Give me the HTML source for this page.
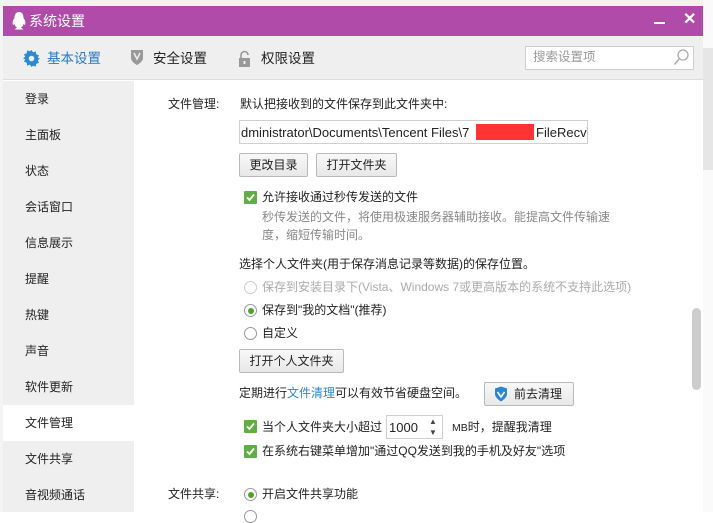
<!DOCTYPE html>
<html><head><meta charset="utf-8"><style>
*{margin:0;padding:0;box-sizing:border-box}
body{width:713px;height:512px;overflow:hidden;background:#fff;position:relative;font-family:"Liberation Sans","Noto Sans CJK SC",sans-serif;font-size:12px;color:#222;line-height:15px}
.a{position:absolute;white-space:nowrap}
.btn{position:absolute;border:1px solid #b9b9b9;border-radius:2px;background:linear-gradient(#f8f8f8,#e8e8e8);text-align:center;font-size:12px;color:#222}
.cb{position:absolute;width:13px;height:13px;background:#5fae43;border-radius:1px}
.cb svg{position:absolute;left:0;top:0}
.rd{position:absolute;width:13px;height:13px;border:1px solid #999;border-radius:50%;background:#fff}
.rd.on::after{content:"";position:absolute;left:2.5px;top:2.5px;width:6px;height:6px;border-radius:50%;background:#4aa72b}
.rd.dis{border-color:#ccc}
.side div{position:absolute;left:25px;font-size:12px}
</style></head><body>
<div class="a" style="left:0;top:0;width:713px;height:6px;background:#f2f2f2"></div>
<div class="a" style="left:703px;top:0;width:10px;height:512px;background:#fafafa"></div>
<div class="a" style="left:703px;top:48px;width:10px;height:122px;background:#e6e6e6"></div>
<div class="a" style="left:0;top:0;width:3px;height:512px;background:#f4f4f4"></div>
<div class="a" style="left:3px;top:6px;width:700px;height:30px;background:#b04ba9"></div>
<svg class="a" style="left:12px;top:12px" width="14" height="18" viewBox="0 0 14 18"><path d="M7 0C3.5 0 2.5 3 2.5 6C1 8 0 10 1 13L2.5 12C3 14 4 15 5 15.5L2.5 17.5H11.5L9 15.5C10 15 11 14 11.5 12L13 13C14 10 13 8 11.5 6C11.5 3 10.5 0 7 0Z" fill="#fff"/></svg>
<div class="a" style="left:29px;top:13px;color:#fff;font-size:14px;line-height:17px">系统设置</div>
<div class="a" style="left:654px;top:22px;width:11px;height:2px;background:#fff"></div>
<div class="a" style="left:683px;top:11px;color:#fff;font-size:16px;font-weight:bold;line-height:18px">✕</div>
<div class="a" style="left:3px;top:36px;width:700px;height:44px;background:#efefef;border-bottom:1px solid #dcdcdc"></div>
<svg class="a" style="left:23px;top:50px" width="17" height="17" viewBox="0 0 16 16"><path d="M8 0l1.5 2.2 2.6-.9.3 2.7 2.6.9-1 2.5L16 8l-2 1.6 1 2.5-2.6.9-.3 2.7-2.6-.9L8 16l-1.5-2.2-2.6.9-.3-2.7-2.6-.9 1-2.5L0 8l2-1.6-1-2.5 2.6-.9.3-2.7 2.6.9Z" fill="#2d89d3"/><circle cx="8" cy="8" r="2.6" fill="#efefef"/></svg>
<div class="a" style="left:47px;top:51px;color:#2579c4;font-size:13.5px;line-height:16px">基本设置</div>
<svg class="a" style="left:130px;top:49px" width="14" height="17" viewBox="0 0 14 17"><path d="M1 1H13V9C13 13 7 16 7 16C7 16 1 13 1 9Z" fill="#999"/><path d="M4 4L7 10L10 4" stroke="#efefef" stroke-width="1.5" fill="none"/></svg>
<div class="a" style="left:153px;top:51px;font-size:13.5px;line-height:16px">安全设置</div>
<svg class="a" style="left:238px;top:50px" width="13" height="17" viewBox="0 0 13 17"><path d="M3 8V5a3.5 3.5 0 017 0" stroke="#999" stroke-width="1.6" fill="none"/><rect x="1" y="8" width="11" height="9" fill="#999"/><rect x="5.5" y="11" width="2" height="3" fill="#efefef"/></svg>
<div class="a" style="left:261px;top:51px;font-size:13.5px;line-height:16px">权限设置</div>
<div class="a" style="left:525px;top:46px;width:169px;height:24px;border:1px solid #cfcfcf;background:#fff"></div>
<div class="a" style="left:533px;top:50px;color:#999;font-size:12.5px">搜索设置项</div>
<svg class="a" style="left:673px;top:49px" width="16" height="17" viewBox="0 0 16 17"><circle cx="10" cy="6" r="5" stroke="#aaa" stroke-width="1.3" fill="none"/><path d="M6.5 9.5L1.5 15.5" stroke="#aaa" stroke-width="1.4"/></svg>
<div class="a" style="left:3px;top:81px;width:131px;height:431px;background:#efefef"></div>
<div class="a" style="left:3px;top:405px;width:131px;height:36px;background:#fff"></div>
<div class="side">
<div style="top:92px">登录</div><div style="top:128px">主面板</div><div style="top:164px">状态</div><div style="top:200px">会话窗口</div><div style="top:236px">信息展示</div><div style="top:272px">提醒</div><div style="top:308px">热键</div><div style="top:344px">声音</div><div style="top:380px">软件更新</div><div style="top:416px">文件管理</div><div style="top:452px">文件共享</div><div style="top:488px">音视频通话</div>
</div>
<div class="a" style="left:692px;top:308px;width:9px;height:82px;background:#cdcdcd;border-radius:5px"></div>
<div class="a" style="left:168px;top:97px">文件管理:</div>
<div class="a" style="left:240px;top:97px">默认把接收到的文件保存到此文件夹中:</div>
<div class="a" style="left:239px;top:120px;width:349px;height:24px;border:1px solid #cfcfcf;background:#fff;overflow:hidden"><span style="position:absolute;left:1px;top:4px;font-size:13px">dministrator\Documents\Tencent Files\7</span><span style="position:absolute;left:236px;top:3px;width:58px;height:16px;background:#fe3434"></span><span style="position:absolute;left:295px;top:4px;font-size:13px;background:#fff;padding-left:1px">FileRecv\</span></div>
<div class="btn" style="left:239px;top:153px;width:69px;height:24px;line-height:22px">更改目录</div>
<div class="btn" style="left:316px;top:153px;width:81px;height:24px;line-height:22px">打开文件夹</div>
<div class="cb" style="left:244px;top:191px"><svg width="13" height="13"><path d="M3 6.5L5.5 9L10 3.5" stroke="#fff" stroke-width="1.8" fill="none"/></svg></div>
<div class="a" style="left:262px;top:190px">允许接收通过秒传发送的文件</div>
<div class="a" style="left:262px;top:210px;color:#888">秒传发送的文件，将使用极速服务器辅助接收。能提高文件传输速</div>
<div class="a" style="left:262px;top:228px;color:#888">度，缩短传输时间。</div>
<div class="a" style="left:239px;top:257px">选择个人文件夹(用于保存消息记录等数据)的保存位置。</div>
<div class="rd dis" style="left:244px;top:281px"></div>
<div class="a" style="left:262px;top:280px;color:#aaa">保存到安装目录下(Vista、Windows 7或更高版本的系统不支持此选项)</div>
<div class="rd on" style="left:244px;top:304px"></div>
<div class="a" style="left:262px;top:303px">保存到"我的文档"(推荐)</div>
<div class="rd" style="left:244px;top:327px"></div>
<div class="a" style="left:262px;top:326px">自定义</div>
<div class="btn" style="left:239px;top:349px;width:105px;height:24px;line-height:22px">打开个人文件夹</div>
<div class="a" style="left:239px;top:386px">定期进行<span style="color:#2b86d0">文件清理</span>可以有效节省硬盘空间。</div>
<div class="btn" style="left:484px;top:382px;width:90px;height:24px;line-height:22px;padding-left:18px">前去清理</div>
<svg class="a" style="left:494px;top:386px" width="14" height="16" viewBox="0 0 14 16"><path d="M7 0.5L13 2.5V8C13 12 7 15.5 7 15.5C7 15.5 1 12 1 8V2.5Z" fill="#2b86d0"/><path d="M3.5 6L7 11L10.5 6" stroke="#fff" stroke-width="1.6" fill="none"/></svg>
<div class="cb" style="left:244px;top:420px"><svg width="13" height="13"><path d="M3 6.5L5.5 9L10 3.5" stroke="#fff" stroke-width="1.8" fill="none"/></svg></div>
<div class="a" style="left:262px;top:420px">当个人文件夹大小超过</div>
<div class="a" style="left:386px;top:415px;width:57px;height:24px;border:1px solid #cfcfcf;background:#fff"><span style="position:absolute;left:2px;top:4px;font-size:13px">1000</span><span style="position:absolute;left:42px;top:0;font-size:8px;color:#444;line-height:11px">▲</span><span style="position:absolute;left:42px;top:11px;font-size:8px;color:#444;line-height:11px">▼</span></div>
<div class="a" style="left:452px;top:420px"><span style="font-size:10.5px">MB</span>时，提醒我清理</div>
<div class="cb" style="left:244px;top:445px"><svg width="13" height="13"><path d="M3 6.5L5.5 9L10 3.5" stroke="#fff" stroke-width="1.8" fill="none"/></svg></div>
<div class="a" style="left:262px;top:444px">在系统右键菜单增加"通过QQ发送到我的手机及好友"选项</div>
<div class="a" style="left:168px;top:487px">文件共享:</div>
<div class="rd on" style="left:244px;top:488px"></div>
<div class="a" style="left:262px;top:487px">开启文件共享功能</div>
<div class="rd" style="left:244px;top:510px"></div>
</body></html>
